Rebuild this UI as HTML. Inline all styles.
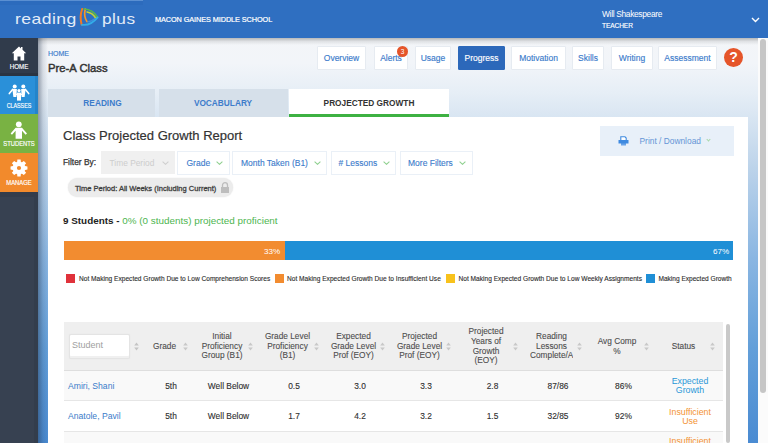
<!DOCTYPE html>
<html><head><meta charset="utf-8">
<style>
*{margin:0;padding:0;box-sizing:border-box}
html,body{width:768px;height:443px;overflow:hidden;background:#fff;font-family:"Liberation Sans",sans-serif}
.a{position:absolute;white-space:nowrap}
#hdr{left:0;top:0;width:768px;height:38px;background:#2f6fc1}
#side{left:0;top:38px;width:38px;height:405px;background:#374151}
.si{position:absolute;left:0;width:38px;color:#fff;font-size:6.5px;line-height:8px;text-align:center;-webkit-text-stroke:0.15px #fff}
#bg{left:38px;top:38px;width:720px;height:405px;background:linear-gradient(#f3f5f8 0px,#f2f5f9 25px,#e6eef6 55px,#d8e5f2 80px,#bcd3ea 130px,#8ab6e2 220px,#639fd9 310px,#4a8bd2 405px)}
#shadowL{left:38px;top:38px;width:10px;height:405px;background:linear-gradient(90deg,rgba(30,45,70,.42),rgba(30,45,70,.12) 50%,rgba(30,45,70,0))}
#shadowT{left:38px;top:38px;width:730px;height:7px;background:linear-gradient(rgba(0,0,0,.25),rgba(0,0,0,.08) 50%,rgba(0,0,0,0))}
#track{left:758px;top:38px;width:10px;height:405px;background:#fbfbfb}
#thumb{left:760px;top:39px;width:6px;height:354px;background:#c6c6c6;border-radius:3px}
.nb{position:absolute;top:46px;height:24px;background:#fff;border:1px solid #e6ebf1;color:#3b7bcb;-webkit-text-stroke:0.15px currentColor;font-size:8.5px;text-align:center;line-height:22px;border-radius:1px}
.tab{position:absolute;top:89px;height:28px;background:#d6e0ea;color:#3d7cca;font-weight:bold;font-size:8.3px;text-align:center;line-height:28px}
#panel{left:48px;top:117px;width:700px;height:326px;background:#fff}
.fb{position:absolute;top:151px;height:23.5px;background:#fff;border:1px solid #eaf0f7;color:#3b7bcb;-webkit-text-stroke:0.12px currentColor;font-size:8.5px;line-height:22.5px;padding-left:9px}
.chev{position:absolute;width:5px;height:5px;border-right:1px solid #8fd08f;border-bottom:1px solid #8fd08f;transform:rotate(45deg)}
.lg{position:absolute;top:274px;width:9px;height:9px}
.lt{position:absolute;top:273px;font-size:6.9px;color:#2e2e2e;line-height:11px;-webkit-text-stroke:0.12px #2e2e2e}
.th{position:absolute;top:322.5px;height:48px;color:#4d4d4d;font-size:8.3px;-webkit-text-stroke:0.1px #4d4d4d;text-align:center;line-height:9.8px;display:flex;align-items:center;justify-content:center}
.sort{position:absolute;width:6px;height:9px}
.td{position:absolute;color:#303030;font-size:8.4px;text-align:center;line-height:9.4px;-webkit-text-stroke:0.12px #303030}
</style></head><body>
<!-- header -->
<div class="a" id="hdr"></div>
<div class="a" style="left:0;top:0;width:143px;height:1px;background:#5a8fd2"></div><div class="a" style="left:0;top:1px;width:143px;height:4px;background:#2c6bbd"></div>
<div class="a" id="logo" style="left:15px;top:9.5px;font-size:15px;color:#e4ecf8;letter-spacing:0.4px;line-height:17px;transform-origin:0 0;transform:scaleX(1.17)">reading</div>
<div class="a" id="logo2" style="left:101.5px;top:9.5px;font-size:15px;color:#e4ecf8;letter-spacing:0.4px;line-height:17px;transform-origin:0 0;transform:scaleX(1.15)">plus</div>
<svg class="a" style="left:79px;top:7.5px" width="20" height="18" viewBox="0 0 20 18">
 <path d="M3.2 1 C1.6 5 1.2 11 2.6 16.5" stroke="#f47a22" stroke-width="2" fill="none" stroke-linecap="round"/>
 <path d="M6.2 1.2 C5.2 5.5 5.6 10 8 13.6" stroke="#f5962b" stroke-width="1.7" fill="none" stroke-linecap="round"/>
 <path d="M5.2 1 C10.5 1.2 15.5 4.5 18.6 9.2" stroke="#58b848" stroke-width="1.7" fill="none" stroke-linecap="round"/>
 <path d="M8 4 C11.5 4.6 14.8 7 16.6 10" stroke="#cbd52e" stroke-width="1.5" fill="none" stroke-linecap="round"/>
 <path d="M3 16.8 C8.5 17.6 14.5 14.5 18.6 9.4" stroke="#33aee8" stroke-width="1.8" fill="none" stroke-linecap="round"/>
 <path d="M8.5 13.8 C11.5 13.8 14.2 12.3 16.4 10.3" stroke="#3d8fdc" stroke-width="1.2" fill="none"/>
</svg>
<div class="a" id="school" style="left:155px;top:15px;font-size:7.3px;color:#fff;line-height:10px;letter-spacing:-0.08px;-webkit-text-stroke:0.2px #fff">MACON GAINES MIDDLE SCHOOL</div>
<div class="a" id="user" style="left:602px;top:9px;font-size:8.4px;color:#fff;line-height:10px;letter-spacing:-0.32px">Will Shakespeare</div>
<div class="a" id="role" style="left:602px;top:21.7px;font-size:6.6px;color:#fff;line-height:8px;letter-spacing:-0.1px;-webkit-text-stroke:0.15px #fff">TEACHER</div>
<svg class="a" style="left:751px;top:17px" width="9" height="6" viewBox="0 0 9 6"><path d="M1 1 L4.5 4.5 L8 1" stroke="#fff" stroke-width="1.4" fill="none"/></svg>

<!-- sidebar -->
<div class="a" id="side"></div>
<div class="a" style="left:0;top:38px;width:38px;height:38px;background:#303b4b"></div>
<div class="a" style="left:0;top:73px;width:38px;height:3px;background:#2a3442"></div>
<div class="a" style="left:0;top:76px;width:38px;height:38px;background:#2a90d9"></div><div class="a" style="left:35px;top:76px;width:3px;height:38px;background:#2484ca"></div>
<div class="a" style="left:0;top:114px;width:38px;height:39px;background:#79b243"></div>
<div class="a" style="left:0;top:153px;width:38px;height:39px;background:#f28a2c"></div><div class="a" style="left:0;top:192px;width:38px;height:5px;background:#333c4b"></div><div class="a" style="left:34px;top:197px;width:4px;height:246px;background:#333d4c"></div>
<div class="si" style="top:62.5px;left:0.2px;transform:scaleX(0.95)">HOME</div>
<div class="si" style="top:102.3px;left:0.1px;transform:scaleX(0.82)">CLASSES</div>
<div class="si" style="top:140px;left:0.2px;transform:scaleX(0.9)">STUDENTS</div>
<div class="si" style="top:178.5px;left:0.2px;transform:scaleX(0.9)">MANAGE</div>

<!-- content bg -->
<div class="a" id="bg"></div>
<div class="a" id="shadowL"></div>
<div class="a" id="shadowT"></div>
<div class="a" id="track"></div>
<div class="a" id="thumb"></div>

<div class="a" id="home" style="left:48px;top:49px;font-size:7px;color:#3b7bcb;line-height:9px;-webkit-text-stroke:0.15px #3b7bcb">HOME</div>
<div class="a" id="pre" style="left:48px;top:61px;font-size:11.3px;color:#333;line-height:14px;-webkit-text-stroke:0.45px #333">Pre-A Class</div>

<div class="nb" style="left:317px;width:49px">Overview</div>
<div class="nb" style="left:374px;width:34px">Alerts</div>
<div class="nb" style="left:415px;width:36px">Usage</div>
<div class="nb" style="left:458px;width:47px;background:#2c68ba;border-color:#2c68ba;color:#fff">Progress</div>
<div class="nb" style="left:511px;width:55px">Motivation</div>
<div class="nb" style="left:572px;width:32px">Skills</div>
<div class="nb" style="left:611px;width:42px">Writing</div>
<div class="nb" style="left:658px;width:59px">Assessment</div>

<div class="tab" style="left:48px;width:107px;padding-left:2px">READING</div>
<div class="tab" style="left:158.5px;width:129px">VOCABULARY</div>
<div class="tab" style="left:289px;width:160px;background:#fff;color:#333">PROJECTED GROWTH</div>
<div class="a" style="left:289px;top:114px;width:160px;height:3px;background:#3db142"></div>

<div class="a" id="panel"></div>

<!-- help & badge -->
<div class="a" style="left:724px;top:48px;width:19px;height:19px;border-radius:50%;background:#e5552a;color:#fff;font-weight:bold;font-size:14px;line-height:19px;text-align:center">?</div>
<div class="a" style="left:397px;top:46px;width:11px;height:11px;border-radius:50%;background:#e5552a;color:#fff;font-size:6.5px;line-height:11px;text-align:center">3</div>

<!-- sidebar icons -->
<svg class="a" style="left:11px;top:46px" width="16" height="15" viewBox="0 0 16 15">
 <path d="M8 0.5 L0.8 7.2 L2.8 7.2 L2.8 14.5 L6.5 14.5 L6.5 10.5 L9.5 10.5 L9.5 14.5 L13.2 14.5 L13.2 7.2 L15.2 7.2 L11.5 3.8 L11.5 1 L10 1 L10 2.4 Z" fill="#fff"/>
</svg>
<svg class="a" style="left:8px;top:83px" width="22" height="19" viewBox="8 83 22 19">
 <circle cx="14.7" cy="86.6" r="2" fill="#fff"/><circle cx="23.3" cy="86.6" r="2" fill="#fff"/><circle cx="19" cy="90.6" r="1.6" fill="#fff"/>
 <path d="M12.4 89 H16.9 L16.4 97 H13.4 Z" fill="#fff"/>
 <path d="M21.1 89 H25.6 L24.6 97 H21.6 Z" fill="#fff"/>
 <path d="M12.8 89.3 L9.3 93.6" stroke="#fff" stroke-width="1.6" stroke-linecap="round"/>
 <path d="M25.2 89.3 L28.7 93.6" stroke="#fff" stroke-width="1.6" stroke-linecap="round"/>
 <path d="M17 92.6 H21 V100.6 H17 Z" fill="#fff"/>
 <path d="M15.8 94.4 H22.2" stroke="#fff" stroke-width="1.4"/>
</svg>
<svg class="a" style="left:10px;top:120px" width="18" height="19" viewBox="0 0 18 19">
 <circle cx="8.8" cy="4.3" r="2.9" fill="#fff"/>
 <path d="M5.6 7.8 L12 7.8 L17 13.6 L15.6 14.8 L12 10.8 L12 18.8 L5.6 18.8 L5.6 10.8 L2 14.8 L0.6 13.6 Z" fill="#fff"/>
</svg>
<svg class="a" style="left:9.5px;top:159px" width="18" height="18" viewBox="0 0 18 18"><path fill="#fff" fill-rule="evenodd" d="M15.11 7.11 L17.45 7.38 L17.45 10.62 L15.11 10.89 L14.66 11.99 L16.12 13.82 L13.82 16.12 L11.99 14.66 L10.89 15.11 L10.62 17.45 L7.38 17.45 L7.11 15.11 L6.01 14.66 L4.18 16.12 L1.88 13.82 L3.34 11.99 L2.89 10.89 L0.55 10.62 L0.55 7.38 L2.89 7.11 L3.34 6.01 L1.88 4.18 L4.18 1.88 L6.01 3.34 L7.11 2.89 L7.38 0.55 L10.62 0.55 L10.89 2.89 L11.99 3.34 L13.82 1.88 L16.12 4.18 L14.66 6.01 Z M11.10 9 A2.1 2.1 0 1 0 6.90 9 A2.1 2.1 0 1 0 11.10 9 Z"/></svg>

<!-- panel content -->
<div class="a" id="title" style="left:63px;top:127.8px;font-size:13px;color:#333;line-height:16px;-webkit-text-stroke:0.2px #333">Class Projected Growth Report</div>
<div class="a" style="left:600px;top:126px;width:133.5px;height:29.5px;background:#e8f0f9"></div>
<svg class="a" style="left:618px;top:136px" width="11" height="10" viewBox="0 0 11 10">
 <path d="M2.8 4 V0.8 H7 L8.2 2 V4" stroke="#3f8ae0" stroke-width="1.1" fill="#fff"/>
 <path d="M0.5 4 H10.5 V7.5 H0.5 Z" fill="#3f8ae0"/>
 <path d="M3 7 H8 V9.5 H3 Z" fill="#3f8ae0" opacity=".75"/>
</svg>
<div class="a" id="print" style="left:639.5px;top:136px;font-size:8.4px;color:#6595d6;line-height:10px">Print / Download</div>
<div class="chev" style="left:707px;top:138px;width:3px;height:3px;border-color:#a8d8a8"></div>

<div class="a" id="filterby" style="left:63px;top:157.2px;font-size:8.4px;color:#333;line-height:10px;-webkit-text-stroke:0.25px #333">Filter By:</div>
<div class="a" style="left:100.5px;top:150.5px;width:74.5px;height:23px;background:#f0f0f0"></div>
<div class="a" style="left:109.5px;top:157.5px;font-size:8.4px;color:#cdcdcd;line-height:10px">Time Period</div>
<div class="fb" style="left:176.5px;width:53px">Grade</div>
<div class="fb" style="left:231.5px;width:95px;padding-left:8.5px">Month Taken (B1)</div>
<div class="fb" style="left:330.5px;width:65.5px;padding-left:7px">&#35; Lessons</div>
<div class="fb" style="left:399.5px;width:73px;padding-left:7.5px">More Filters</div>

<svg class="a" style="left:162px;top:160.5px" width="7" height="4" viewBox="0 0 7 4"><path d="M0.6 0.6 L3.5 3.3 L6.4 0.6" stroke="#cfcfcf" stroke-width="1.1" fill="none"/></svg>
<svg class="a" style="left:216px;top:160.5px" width="7" height="4" viewBox="0 0 7 4"><path d="M0.6 0.6 L3.5 3.3 L6.4 0.6" stroke="#8fd08f" stroke-width="1.1" fill="none"/></svg>
<svg class="a" style="left:313.5px;top:160.5px" width="7" height="4" viewBox="0 0 7 4"><path d="M0.6 0.6 L3.5 3.3 L6.4 0.6" stroke="#8fd08f" stroke-width="1.1" fill="none"/></svg>
<svg class="a" style="left:383px;top:160.5px" width="7" height="4" viewBox="0 0 7 4"><path d="M0.6 0.6 L3.5 3.3 L6.4 0.6" stroke="#8fd08f" stroke-width="1.1" fill="none"/></svg>
<svg class="a" style="left:458.5px;top:160.5px" width="7" height="4" viewBox="0 0 7 4"><path d="M0.6 0.6 L3.5 3.3 L6.4 0.6" stroke="#8fd08f" stroke-width="1.1" fill="none"/></svg>
<div class="a" style="left:67.5px;top:178px;width:165px;height:19px;background:#ececec;border-radius:9.5px;box-shadow:0 0 1.5px #e4e4e4"></div>
<div class="a" id="pill" style="left:75px;top:183.7px;font-size:7.5px;color:#3e3e3e;line-height:10px;-webkit-text-stroke:0.3px #3e3e3e">Time Period: All Weeks (Including Current)</div>
<svg class="a" style="left:220px;top:182px" width="10" height="11" viewBox="0 0 10 11">
 <path d="M2.5 5 V3.2 A2.5 2.5 0 0 1 7.5 3.2 V5" stroke="#bdbdbd" stroke-width="1.3" fill="none"/>
 <rect x="1" y="5" width="8" height="6" fill="#bdbdbd"/>
</svg>

<div class="a" id="stud" style="left:63px;top:215px;font-size:9.9px;line-height:12px;color:#222"><b>9 Students -</b> <span style="color:#4db54f">0% (0 students) projected proficient</span></div>
<div class="a" style="left:64px;top:241px;width:221px;height:19px;background:#f28c30"></div>
<div class="a" style="left:285px;top:241px;width:448px;height:19px;background:#1f8fd6"></div>
<div class="a" style="left:264px;top:246.5px;font-size:8.1px;color:#fff;line-height:10px">33%</div>
<div class="a" style="left:713px;top:246.5px;font-size:8.1px;color:#fff;line-height:10px">67%</div>

<div class="lg" style="left:66px;background:#e0323b"></div>
<div class="lt" id="l1" style="left:79px;font-size:6.58px">Not Making Expected Growth Due to Low Comprehension Scores</div>
<div class="lg" style="left:275px;background:#f28c30"></div>
<div class="lt" id="l2" style="left:287px;font-size:6.6px">Not Making Expected Growth Due to Insufficient Use</div>
<div class="lg" style="left:446px;background:#f8c21c"></div>
<div class="lt" id="l3" style="left:458.5px;font-size:6.6px">Not Making Expected Growth Due to Low Weekly Assignments</div>
<div class="lg" style="left:646px;background:#1f8fd6"></div>
<div class="lt" id="l4" style="left:658.5px;font-size:6.55px">Making Expected Growth</div>

<!-- table -->
<div class="a" style="left:64px;top:322px;width:659px;height:48px;background:#efefef"></div>
<div class="a" style="left:64px;top:370px;width:659px;height:1px;background:#dedede"></div>
<div class="a" style="left:64px;top:371px;width:659px;height:29px;background:#f9f9f9"></div>
<div class="a" style="left:64px;top:400px;width:659px;height:1px;background:#e6e6e6"></div>
<div class="a" style="left:64px;top:431px;width:659px;height:1px;background:#e6e6e6"></div>
<div class="a" style="left:64px;top:432px;width:659px;height:11px;background:#f9f9f9"></div>
<div class="a" style="left:725.5px;top:324px;width:4.5px;height:119px;background:#c9c9c9;border-radius:2px"></div>

<div class="a" style="left:68.5px;top:333.5px;width:61px;height:25px;background:#fff;border:1px solid #e4e4e4;border-radius:2px;box-shadow:inset 0 -2px 0 #f0f0f0, 0 0 1px #e0e0e0"></div>
<div class="a" style="left:72px;top:340px;font-size:9px;color:#a0a0a0;line-height:10px">Student</div>
<svg class="a" style="left:134px;top:342px" width="5" height="9" viewBox="0 0 5 9"><path d="M2.5 0.5 L4.8 3.6 H0.2 Z M2.5 8.5 L4.8 5.4 H0.2 Z" fill="#c4c4c4"/></svg>
<div class="th" style="left:146px;width:37px"><div style="text-align:center;">Grade</div></div>
<svg class="a" style="left:183px;top:341.5px" width="5" height="9" viewBox="0 0 5 9"><path d="M2.5 0.5 L4.8 3.6 H0.2 Z M2.5 8.5 L4.8 5.4 H0.2 Z" fill="#c8c8c8"/></svg>
<div class="th" style="left:196px;width:52px"><div style="text-align:center;">Initial<br>Proficiency<br>Group (B1)</div></div>
<svg class="a" style="left:248px;top:341.5px" width="5" height="9" viewBox="0 0 5 9"><path d="M2.5 0.5 L4.8 3.6 H0.2 Z M2.5 8.5 L4.8 5.4 H0.2 Z" fill="#c8c8c8"/></svg>
<div class="th" style="left:261px;width:53px"><div style="text-align:center;">Grade Level<br>Proficiency<br>(B1)</div></div>
<svg class="a" style="left:314px;top:341.5px" width="5" height="9" viewBox="0 0 5 9"><path d="M2.5 0.5 L4.8 3.6 H0.2 Z M2.5 8.5 L4.8 5.4 H0.2 Z" fill="#c8c8c8"/></svg>
<div class="th" style="left:327px;width:53px"><div style="text-align:center;">Expected<br>Grade Level<br>Prof (EOY)</div></div>
<svg class="a" style="left:380px;top:341.5px" width="5" height="9" viewBox="0 0 5 9"><path d="M2.5 0.5 L4.8 3.6 H0.2 Z M2.5 8.5 L4.8 5.4 H0.2 Z" fill="#c8c8c8"/></svg>
<div class="th" style="left:393px;width:53px"><div style="text-align:center;">Projected<br>Grade Level<br>Prof (EOY)</div></div>
<svg class="a" style="left:446px;top:341.5px" width="5" height="9" viewBox="0 0 5 9"><path d="M2.5 0.5 L4.8 3.6 H0.2 Z M2.5 8.5 L4.8 5.4 H0.2 Z" fill="#c8c8c8"/></svg>
<div class="th" style="left:459px;width:54px"><div style="text-align:center;">Projected<br>Years of<br>Growth<br>(EOY)</div></div>
<svg class="a" style="left:513px;top:341.5px" width="5" height="9" viewBox="0 0 5 9"><path d="M2.5 0.5 L4.8 3.6 H0.2 Z M2.5 8.5 L4.8 5.4 H0.2 Z" fill="#c8c8c8"/></svg>
<div class="th" style="left:526px;width:51px"><div style="text-align:center;width:43px;overflow:hidden;">Reading<br>Lessons<br>Complete/A</div></div>
<svg class="a" style="left:577px;top:341.5px" width="5" height="9" viewBox="0 0 5 9"><path d="M2.5 0.5 L4.8 3.6 H0.2 Z M2.5 8.5 L4.8 5.4 H0.2 Z" fill="#c8c8c8"/></svg>
<div class="th" style="left:590px;width:54px"><div style="text-align:center;">Avg Comp<br>%</div></div>
<svg class="a" style="left:644px;top:341.5px" width="5" height="9" viewBox="0 0 5 9"><path d="M2.5 0.5 L4.8 3.6 H0.2 Z M2.5 8.5 L4.8 5.4 H0.2 Z" fill="#c8c8c8"/></svg>
<div class="th" style="left:657px;width:53px"><div style="text-align:center;">Status</div></div>
<svg class="a" style="left:710px;top:341.5px" width="5" height="9" viewBox="0 0 5 9"><path d="M2.5 0.5 L4.8 3.6 H0.2 Z M2.5 8.5 L4.8 5.4 H0.2 Z" fill="#c8c8c8"/></svg>
<div class="a" style="left:68px;top:381px;font-size:8.6px;color:#3a7bc9;line-height:10px">Amiri, Shani</div>
<div class="td" style="left:146px;top:381px;width:50px;line-height:10px">5th</div>
<div class="td" style="left:196px;top:381px;width:65px;line-height:10px">Well Below</div>
<div class="td" style="left:261px;top:381px;width:66px;line-height:10px">0.5</div>
<div class="td" style="left:327px;top:381px;width:66px;line-height:10px">3.0</div>
<div class="td" style="left:393px;top:381px;width:66px;line-height:10px">3.3</div>
<div class="td" style="left:459px;top:381px;width:67px;line-height:10px">2.8</div>
<div class="td" style="left:526px;top:381px;width:64px;line-height:10px">87/86</div>
<div class="td" style="left:590px;top:381px;width:67px;line-height:10px">86%</div>
<div class="a" style="left:657px;top:377px;width:66px;text-align:center;font-size:8.8px;color:#2a98d8;line-height:9.1px">Expected<br>Growth</div>
<div class="a" style="left:68px;top:411.3px;font-size:8.6px;color:#3a7bc9;line-height:10px">Anatole, Pavil</div>
<div class="td" style="left:146px;top:411.3px;width:50px;line-height:10px">5th</div>
<div class="td" style="left:196px;top:411.3px;width:65px;line-height:10px">Well Below</div>
<div class="td" style="left:261px;top:411.3px;width:66px;line-height:10px">1.7</div>
<div class="td" style="left:327px;top:411.3px;width:66px;line-height:10px">4.2</div>
<div class="td" style="left:393px;top:411.3px;width:66px;line-height:10px">3.2</div>
<div class="td" style="left:459px;top:411.3px;width:67px;line-height:10px">1.5</div>
<div class="td" style="left:526px;top:411.3px;width:64px;line-height:10px">32/85</div>
<div class="td" style="left:590px;top:411.3px;width:67px;line-height:10px">92%</div>
<div class="a" style="left:657px;top:407.5px;width:66px;text-align:center;font-size:8.8px;color:#f39233;line-height:9.1px">Insufficient<br>Use</div>
<div class="a" style="left:657px;top:436.5px;width:66px;text-align:center;font-size:8.8px;color:#f39233;line-height:9.1px">Insufficient<br>Use</div>
</body></html>
